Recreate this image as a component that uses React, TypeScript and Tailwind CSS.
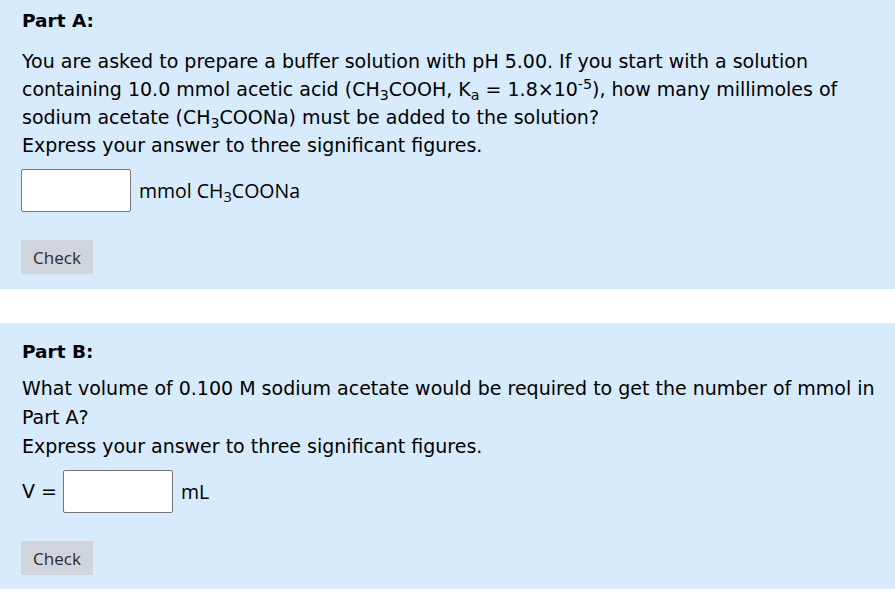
const body = "font-['Verdana','DejaVu_Sans',sans-serif]"
const ui = "font-['Segoe_UI','Open_Sans',sans-serif]"

function CheckButton() {
  return (
    <button className={`${ui} w-[72px] h-[34px] bg-[#d0d5dc] text-[#2b2b2b] text-[17px] leading-none`}>
      Check
    </button>
  )
}

function AnswerBox() {
  return <input type="text" className="w-[110px] h-[43px] bg-white border border-[#767676] rounded-[2px]" />
}

export default function App() {
  return (
    <div className={`${body} w-[895px] h-[593px] bg-white text-black`}>
      {/* Part A */}
      <section className="bg-[#d7ebfc] h-[289px] pl-[21px] pr-4 pt-[7px]">
        <h3 className="text-[18.5px] font-bold leading-[28px] pl-px">Part A:</h3>
        <p className="mt-3 text-[19px] leading-[28px] pl-px">
          You are asked to prepare a buffer solution with pH 5.00. If you start with a solution containing 10.0 mmol
          acetic acid (CH<sub>3</sub>COOH, K<sub>a</sub> = 1.8×10<sup>-5</sup>), how many millimoles of sodium acetate
          (CH<sub>3</sub>COONa) must be added to the solution?
          <br />
          Express your answer to three significant figures.
        </p>
        <div className="mt-[10px] flex items-center gap-2">
          <AnswerBox />
          <span className={`${ui} text-[19.5px]`}>
            mmol CH<sub>3</sub>COONa
          </span>
        </div>
        <div className="mt-[28px]">
          <CheckButton />
        </div>
      </section>

      <div className="h-[34px]" />

      {/* Part B */}
      <section className="bg-[#d7ebfc] h-[266px] pl-[21px] pr-4 pt-[15px]">
        <h3 className="text-[18.5px] font-bold leading-[28px] pl-px">Part B:</h3>
        <p className="mt-2 text-[19px] leading-[29px] pl-px">
          What volume of 0.100 M sodium acetate would be required to get the number of mmol in Part A?
          <br />
          Express your answer to three significant figures.
        </p>
        <div className="mt-[9px] flex items-center">
          <span className="text-[19px] pl-px mr-[6px]">V =</span>
          <AnswerBox />
          <span className={`${ui} text-[19.5px] ml-2`}>mL</span>
        </div>
        <div className="mt-[28px]">
          <CheckButton />
        </div>
      </section>
    </div>
  )
}
